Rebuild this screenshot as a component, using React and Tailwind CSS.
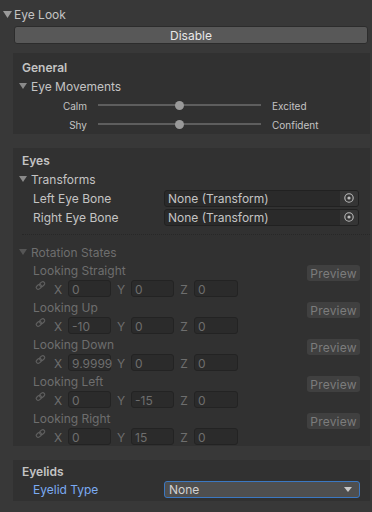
import React from "react";

const Tri = ({ w = 9, h = 7, className = "" }) => (
  <svg width={w} height={h} viewBox={`0 0 ${w} ${h}`} className={className}>
    <path d={`M0 0 H${w} L${w / 2} ${h} Z`} fill="currentColor" />
  </svg>
);

const LinkIcon = () => (
  <svg width="11" height="11" viewBox="0 0 11 11" className="text-[#5e5e5e]">
    <g fill="none" stroke="currentColor" strokeWidth="1.2" transform="rotate(-40 5.5 5.5)">
      <rect x="0.6" y="3.6" width="5.6" height="3.8" rx="1.9" />
      <rect x="4.8" y="3.6" width="5.6" height="3.8" rx="1.9" />
    </g>
  </svg>
);

const Picker = () => (
  <svg width="10" height="10" viewBox="0 0 10 10">
    <circle cx="5" cy="5" r="4.2" fill="none" stroke="#bdbdbd" strokeWidth="1.1" />
    <circle cx="5" cy="5" r="1.6" fill="#bdbdbd" />
  </svg>
);

const Slider = ({ left, right }) => (
  <div className="h-[18px] flex items-center text-[10px] text-[#c4c4c4]">
    <div className="w-[74px] text-right pt-[2px]">{left}</div>
    <div className="ml-[11px] relative w-[163px] h-[2px] bg-[#5e5e5e]">
      <div className="absolute left-[77px] top-[-3.5px] w-[9px] h-[9px] rounded-full bg-[#999999]" />
    </div>
    <div className="ml-[11px] pt-[2px]">{right}</div>
  </div>
);

const ObjField = ({ label }) => (
  <div className="h-[18px] flex items-center">
    <div className="pl-[20px] w-[151px] pt-[2px]">{label}</div>
    <div className="w-[195px] h-[17px] flex items-center rounded-[3px] bg-[#2a2a2a] border border-[#212121] overflow-hidden">
      <div className="flex-1 pl-[3px] pt-[2px]">None (Transform)</div>
      <div className="w-[18px] h-full bg-[#353535] flex items-center justify-center">
        <Picker />
      </div>
    </div>
  </div>
);

const NumField = ({ v, w = 43 }) => (
  <div
    className={`${w === 44 ? "w-[44px]" : "w-[43px]"} h-[17px] rounded-[3px] bg-[#2b2b2b] border border-[#232323] flex items-center pl-[3px] pt-[2px] text-[#6e6e6e]`}
  >
    {v}
  </div>
);

const State = ({ label, x, y, z }) => (
  <div className="flex flex-col">
    <div className="h-[18px] flex justify-between items-start pl-[20px] pr-[10px]">
      <div className="h-[18px] flex items-center pt-[2px] text-[#6e6e6e]">{label}</div>
      <div className="mt-[4px] w-[53px] h-[16px] rounded-[3px] bg-[#404040] flex items-center justify-center pt-[1px] text-[#7c7c7c] tracking-[0.2px] whitespace-nowrap">
        Preview
      </div>
    </div>
    <div className="h-[19px] flex items-center pl-[20px] text-[#6e6e6e]">
      <div className="w-[15px] h-[17px] flex items-start pl-[2px]">
        <LinkIcon />
      </div>
      <div className="w-[20px] text-center pt-[2px]">X</div>
      <NumField v={x} />
      <div className="w-[20px] text-center pt-[2px]">Y</div>
      <NumField v={y} />
      <div className="w-[20px] text-center pt-[2px]">Z</div>
      <NumField v={z} w={44} />
    </div>
  </div>
);

export default function App() {
  return (
    <div className="w-[372px] h-[512px] overflow-hidden bg-[#383838] text-[#c4c4c4] text-[12px] leading-none font-['Inter',sans-serif]">
      <div className="pt-[5px] h-[23px] flex items-center pl-[3px] gap-[2px]">
        <Tri w={9} h={7} className="text-[#9a9a9a]" />
        <span className="pt-[2px]">Eye Look</span>
      </div>
      <div className="mt-[3px] ml-[14px] w-[354px] h-[18px] rounded-[3px] bg-[#585858] border border-[#2c2c2c] flex items-center justify-center pt-[2px] text-[#e8e8e8]">
        Disable
      </div>

      {/* General */}
      <div className="mt-[9px] ml-[13px] w-[357px] bg-[#313131] pt-[5px] pb-[1px] flex flex-col gap-[1px]">
        <div className="h-[18px] flex items-center pl-[9px] pt-[2px] font-semibold">General</div>
        <div className="h-[18px] flex items-center pl-[6px] gap-[4px]">
          <Tri w={8} h={6} className="text-[#8a8a8a]" />
          <span className="pt-[2px]">Eye Movements</span>
        </div>
        <Slider left="Calm" right="Excited" />
        <Slider left="Shy" right="Confident" />
      </div>

      {/* Eyes */}
      <div className="mt-[14px] ml-[13px] w-[357px] bg-[#313131] pt-[3px] flex flex-col">
        <div className="flex flex-col gap-[1px]">
          <div className="h-[18px] flex items-center pl-[9px] pt-[2px] font-semibold">Eyes</div>
          <div className="h-[18px] flex items-center pl-[6px] gap-[4px]">
            <Tri w={8} h={6} className="text-[#8a8a8a]" />
            <span className="pt-[2px]">Transforms</span>
          </div>
          <ObjField label="Left Eye Bone" />
          <ObjField label="Right Eye Bone" />
        </div>
        <div className="mt-[8px] ml-[9px] border-t border-dotted border-[#272727]" />
        <div className="mt-[8px] h-[18px] flex items-center pl-[6px] gap-[4px] text-[#6e6e6e]">
          <Tri w={8} h={6} className="text-[#555555]" />
          <span className="pt-[2px]">Rotation States</span>
        </div>
        <State label="Looking Straight" x="0" y="0" z="0" />
        <State label="Looking Up" x="-10" y="0" z="0" />
        <State label="Looking Down" x="9.9999" y="0" z="0" />
        <State label="Looking Left" x="0" y="-15" z="0" />
        <State label="Looking Right" x="0" y="15" z="0" />
      </div>

      {/* Eyelids */}
      <div className="mt-[14px] ml-[13px] w-[357px] bg-[#313131] pt-[2px] pb-[3px] flex flex-col">
        <div className="h-[18px] flex items-center pl-[9px] pt-[2px] font-semibold">Eyelids</div>
        <div className="h-[18px] flex items-center">
          <div className="pl-[20px] w-[151px] pt-[2px] text-[#7babf3]">Eyelid Type</div>
          <div className="w-[196px] h-[17px] rounded-[3px] bg-[#4f4f4f] border border-[#3b78c2] flex items-center pl-[4px] pr-[7px] text-[#d2d2d2]">
            <span className="flex-1 pt-[2px]">None</span>
            <svg width="8" height="5" viewBox="0 0 8 5">
              <path d="M0 0 H8 L4 5 Z" fill="#c8c8c8" />
            </svg>
          </div>
        </div>
      </div>
    </div>
  );
}
